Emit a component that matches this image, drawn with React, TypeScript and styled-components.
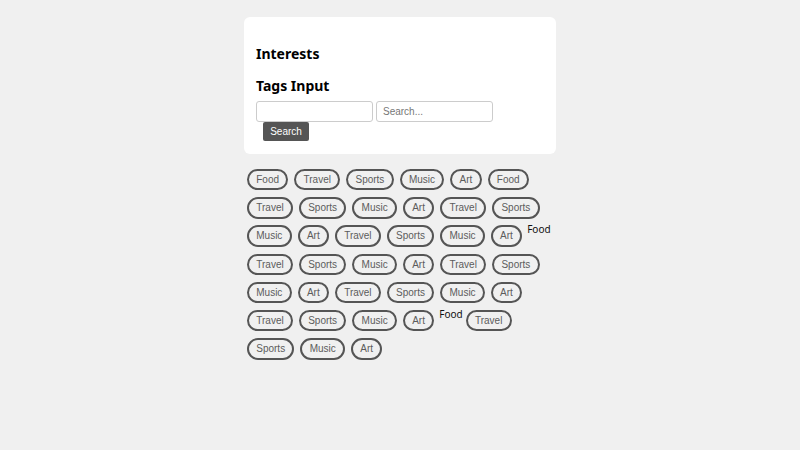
import styled, { createGlobalStyle } from "styled-components";

const GlobalStyle = createGlobalStyle`
  html, body {
    margin: 0;
    padding: 0;
    background: #f0f0f0;
    font-family: "Noto Sans", "Open Sans", sans-serif;
  }
`;

const Page = styled.div`
  width: 312px;
  margin: 17px auto 0;
`;

const Card = styled.div`
  background: #fff;
  border-radius: 6px;
  padding: 27px 12px 13px;
`;

const Heading = styled.h2<{ $gap: number }>`
  margin: 0 0 ${({ $gap }) => $gap}px;
  font-size: 14px;
  line-height: 19px;
  font-weight: 700;
  color: #000;
`;

const InputRow = styled.div`
  display: flex;
  flex-wrap: wrap;
  gap: 3px;
  width: 240px;
`;

const TextInput = styled.input`
  box-sizing: border-box;
  width: 117px;
  height: 21px;
  border: 1px solid #ccc;
  border-radius: 3px;
  padding: 0 6px;
  font-family: "Liberation Sans", Arial, sans-serif;
  font-size: 10px;
  color: #333;
  &::placeholder {
    color: #777;
  }
`;

const SearchButton = styled.button`
  margin-left: 7px;
  margin-top: -3px;
  width: 46px;
  height: 19px;
  padding: 0;
  border: none;
  border-radius: 2px;
  background: #555;
  color: #fff;
  font-family: "Liberation Sans", Arial, sans-serif;
  font-size: 10px;
`;

const TagList = styled.div`
  display: flex;
  flex-wrap: wrap;
  margin-top: 11.65px;
  width: 312px;
`;

const Tag = styled.span`
  margin: 3.35px 3px;
  padding: 3px 7.25px;
  border: 2px solid #555;
  border-radius: 12px;
  font-family: "Liberation Sans", Arial, sans-serif;
  font-size: 10px;
  line-height: 11.5px;
  color: #5c5c5c;
`;

const LooseTag = styled.span`
  padding: 1px 0 0 2px;
  font-size: 10px;
  line-height: 13px;
  color: #111;
`;

const tags: string[] = [
  "Food", "Travel", "Sports", "Music", "Art", "Food",
  "Travel", "Sports", "Music", "Art", "Travel", "Sports",
  "Music", "Art", "Travel", "Sports", "Music", "Art", "*Food",
  "Travel", "Sports", "Music", "Art", "Travel", "Sports",
  "Music", "Art", "Travel", "Sports", "Music", "Art",
  "Travel", "Sports", "Music", "Art", "*Food", "Travel",
  "Sports", "Music", "Art",
];

export default function App() {
  return (
    <>
      <GlobalStyle />
      <Page>
        <Card>
          <Heading $gap={13}>Interests</Heading>
          <Heading $gap={6}>Tags Input</Heading>
          <InputRow>
            <TextInput type="text" />
            <TextInput type="text" placeholder="Search..." />
            <SearchButton>Search</SearchButton>
          </InputRow>
        </Card>
        <TagList>
          {tags.map((t, i) =>
            t.startsWith("*") ? (
              <LooseTag key={i}>{t.slice(1)}</LooseTag>
            ) : (
              <Tag key={i}>{t}</Tag>
            )
          )}
        </TagList>
      </Page>
    </>
  );
}
